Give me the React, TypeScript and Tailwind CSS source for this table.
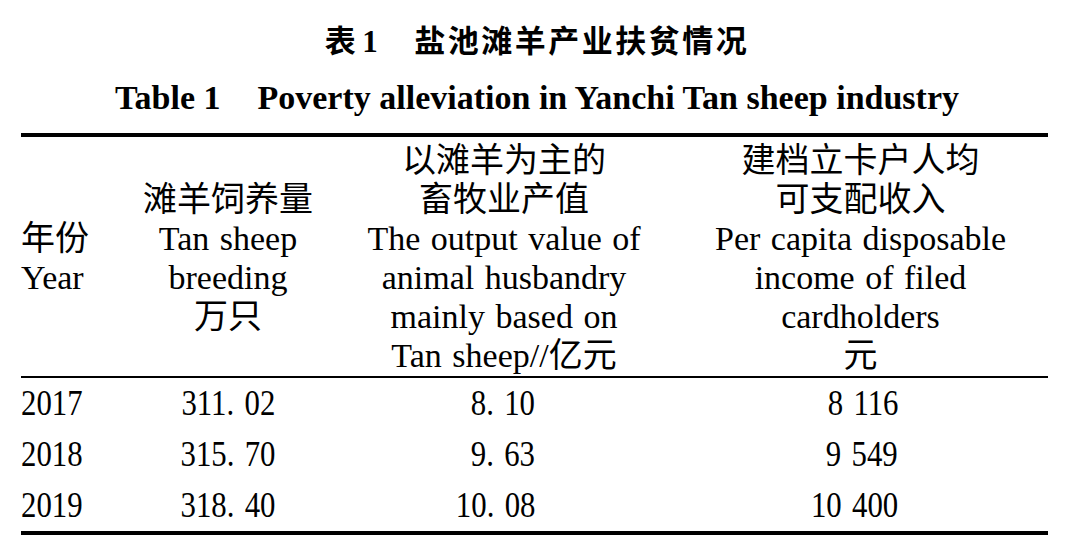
const serif = "font-['Liberation_Serif','Noto_Sans_CJK_SC',serif]";

const rows = [
  { year: "2017", breeding: "311. 02", output: "8. 10", income: "8 116" },
  { year: "2018", breeding: "315. 70", output: "9. 63", income: "9 549" },
  { year: "2019", breeding: "318. 40", output: "10. 08", income: "10 400" },
];

const cols = "grid grid-cols-[100px_214px_338px_375px]";

export default function App() {
  return (
    <div className={`w-[1074px] h-[535px] bg-white text-black overflow-hidden ${serif}`}>
      {/* Titles */}
      <div className="pt-[17px] flex justify-center items-center h-[62px]">
        <span className="font-['Noto_Sans_CJK_SC',sans-serif] font-bold text-[31px] leading-none tracking-[2.5px]">
          表<span className={`${serif} ml-[4px]`}>1</span>
          <span className="ml-[34px]">盐池滩羊产业扶贫情况</span>
        </span>
      </div>
      <div className="flex justify-center items-center h-[38px] mt-[17px]">
        <h1 className="font-bold text-[34px] leading-none whitespace-nowrap">
          Table 1<span className="ml-[37px]">Poverty alleviation in Yanchi Tan sheep industry</span>
        </h1>
      </div>

      {/* Table */}
      <div className="ml-[21px] w-[1027px] mt-[16px] border-t-4 border-b-4 border-black">
        {/* Header */}
        <div className={`${cols} h-[241px] pt-[3px] border-b-2 border-black text-[34px] leading-[39px] items-center [word-spacing:2px]`}>
          <div className="flex flex-col">
            <span>年份</span>
            <span>Year</span>
          </div>
          <div className="flex flex-col items-center">
            <span>滩羊饲养量</span>
            <span>Tan sheep</span>
            <span>breeding</span>
            <span>万只</span>
          </div>
          <div className="flex flex-col items-center">
            <span>以滩羊为主的</span>
            <span>畜牧业产值</span>
            <span>The output value of</span>
            <span>animal husbandry</span>
            <span>mainly based on</span>
            <span>Tan sheep//亿元</span>
          </div>
          <div className="flex flex-col items-center">
            <span>建档立卡户人均</span>
            <span>可支配收入</span>
            <span>Per capita disposable</span>
            <span>income of filed</span>
            <span>cardholders</span>
            <span>元</span>
          </div>
        </div>

        {/* Body */}
        <div>
          {rows.map((r) => (
            <div key={r.year} className={`${cols} h-[51px] items-center text-[35px] leading-none [word-spacing:3px]`}>
              <div>
                <span className="inline-block scale-x-[0.88] origin-left">{r.year}</span>
              </div>
              <div className="text-center">
                <span className="inline-block scale-x-[0.88] origin-center whitespace-pre">{r.breeding}</span>
              </div>
              <div className="text-right pr-[138px]">
                <span className="inline-block scale-x-[0.88] origin-right whitespace-pre">{r.output}</span>
              </div>
              <div className="text-right pr-[150px]">
                <span className="inline-block scale-x-[0.88] origin-right whitespace-pre">{r.income}</span>
              </div>
            </div>
          ))}
        </div>
      </div>
    </div>
  );
}
